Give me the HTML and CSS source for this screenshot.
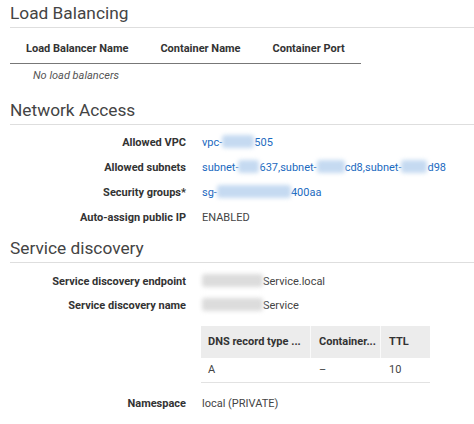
FILE: index.html
```html
<!DOCTYPE html>
<html>
<head>
<meta charset="utf-8">
<meta name="format-detection" content="telephone=no">
<link rel="stylesheet" href="styles.css">
</head>
<body>
<div class="page">
  <section class="sec sec-lb">
    <h2 class="title">Load Balancing</h2>
    <table class="lb-table">
      <thead>
        <tr><th>Load Balancer Name</th><th>Container Name</th><th>Container Port</th></tr>
      </thead>
      <tbody>
        <tr><td colspan="3" class="empty">No load balancers</td></tr>
      </tbody>
    </table>
  </section>

  <section class="sec sec-net">
    <h2 class="title">Network Access</h2>
    <div class="kv">
      <div class="k">Allowed VPC</div>
      <div class="v link">vpc-<span class="blur blue w32"></span>505</div>
      <div class="k">Allowed subnets</div>
      <div class="v link">subnet-<span class="blur blue w21"></span>637,subnet-<span class="blur blue w28"></span>cd8,subnet-<span class="blur blue w26"></span>d98</div>
      <div class="k">Security groups*</div>
      <div class="v link">sg-<span class="blur blue w74"></span>400aa</div>
      <div class="k">Auto-assign public IP</div>
      <div class="v">ENABLED</div>
    </div>
  </section>

  <section class="sec sec-sd">
    <h2 class="title">Service discovery</h2>
    <div class="kv">
      <div class="k">Service discovery endpoint</div>
      <div class="v"><span class="blur gray w61"></span>Service.local</div>
      <div class="k">Service discovery name</div>
      <div class="v"><span class="blur gray w61"></span>Service</div>
      <div class="k"></div>
      <div class="v tablecell">
        <div class="dns-table">
          <div class="dns-row dns-head">
            <div class="dc c1">DNS record type ...</div>
            <div class="dc c2">Container...</div>
            <div class="dc c3">TTL</div>
          </div>
          <div class="dns-row dns-body">
            <div class="dc c1">A</div>
            <div class="dc c2">–</div>
            <div class="dc c3 ttl">10</div>
          </div>
        </div>
      </div>
      <div class="k">Namespace</div>
      <div class="v">local (PRIVATE)</div>
    </div>
  </section>
</div>
</body>
</html>
```
FILE: styles.css
```css
html, body {
  margin: 0;
  padding: 0;
  background: #fff;
}
body {
  font-family: Roboto, "Liberation Sans", Arial, sans-serif;
  font-size: 11px;
  color: #444;
}
.page {
  padding-left: 10px;
}
.title {
  margin: 0;
  font-size: 17.3px;
  font-weight: 400;
  line-height: 22px;
  color: #444;
  padding-bottom: 3px;
  border-bottom: 1px solid #dedede;
}
.sec-lb .title { margin-top: 2px; }
.sec-net { margin-top: 11px; }
.sec-sd { margin-top: 7px; }

.lb-table {
  border-collapse: collapse;
  margin-top: 7px;
}
.lb-table th {
  font-weight: 700;
  color: #333;
  text-align: left;
  padding: 7px 16px 7px;
  line-height: 14px;
  border-bottom: 1px solid #777;
  white-space: nowrap;
}
.lb-table td.empty {
  font-style: italic;
  color: #555;
  padding: 5px 23px 5px;
  line-height: 14px;
}

.kv {
  display: grid;
  grid-template-columns: 176px 1fr;
  column-gap: 16px;
  margin-top: 6px;
}
.k {
  text-align: right;
  font-weight: 700;
  color: #333;
  line-height: 16px;
  padding: 4.4px 0;
  white-space: nowrap;
}
.v {
  line-height: 16px;
  padding: 4.4px 0;
  white-space: nowrap;
  color: #444;
}
.link { color: #1b6ac0; }
.blur {
  display: inline-block;
  height: 13px;
  vertical-align: -2px;
  filter: blur(2px);
  border-radius: 3px;
}
.blur.blue { background: #c5daf1; }
.blur.gray { background: #dcdcdc; }
.w21 { width: 21px; }
.w26 { width: 26px; }
.w28 { width: 28px; }
.w32 { width: 32px; }
.w61 { width: 61px; }
.w74 { width: 74px; }

.tablecell {
  padding: 7px 0 9px 0;
  margin-left: -1px;
}
.dns-table {
  width: 229px;
  display: flex;
  flex-direction: column;
}
.dns-row {
  display: flex;
}
.dns-head {
  background: #ececec;
  height: 32px;
  font-weight: 700;
  color: #333;
}
.dns-body {
  height: 24px;
  border-bottom: 1px solid #e2e2e2;
  color: #444;
}
.dc {
  display: flex;
  align-items: center;
  line-height: 14px;
  white-space: nowrap;
  overflow: hidden;
  box-sizing: border-box;
}
.c1 { width: 110px; padding-left: 7px; }
.c2 { width: 70px; padding-left: 8px; }
.c3 { flex: 1; padding-left: 8px; }
.dns-head .c1, .dns-head .c2 { border-right: 1px solid #fafafa; }
.ttl { color: #444; }
```
